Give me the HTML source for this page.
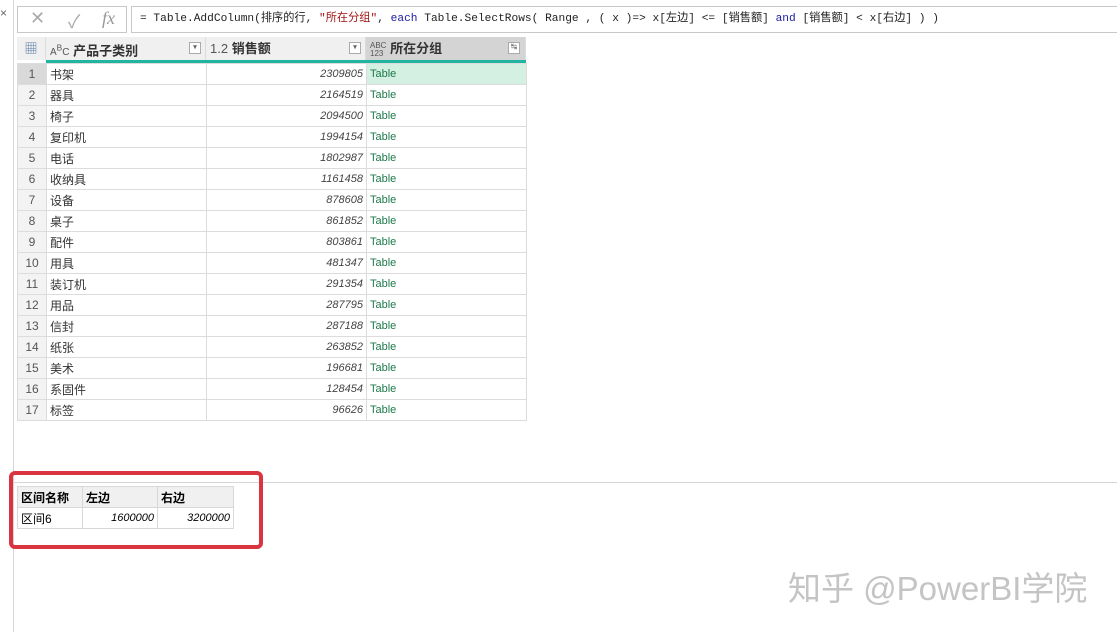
<!DOCTYPE html>
<html><head><meta charset="utf-8"><style>
body{margin:0;width:1117px;height:632px;background:#fff;position:relative;overflow:hidden;font-family:"Liberation Sans","Noto Sans CJK SC",sans-serif;}
.a{position:absolute}
.vl{left:13px;top:0;width:1px;height:632px;background:#d6d6d6}
.fb{left:17px;top:6px;width:110px;height:27px;border:1px solid #c8c8c8;box-sizing:border-box;color:#aaa;font-size:18px}
.ft{left:131px;top:6px;width:990px;height:27px;border:1px solid #c8c8c8;box-sizing:border-box;font-family:"Liberation Mono","Noto Sans CJK SC",monospace;font-size:11.2px;line-height:25px;padding-left:8px;white-space:nowrap;color:#222}
table{border-collapse:collapse;position:absolute;table-layout:fixed}
.t tr{height:21px}
.t td{border:1px solid #dcdcdc;height:21px;padding:0 3px;font-size:12px;box-sizing:border-box;color:#333}
.t td.n{background:#f3f3f3;color:#555;text-align:center;width:29px}
.t td.v{text-align:right;font-style:italic;font-size:11px;color:#444}
.t td.tb{color:#1d7a4a;font-size:11px}
.h{left:17px;top:37px;height:23px;width:509px;background:#f0f0f0;font-size:13px;font-weight:bold;color:#333}
.h div{position:absolute;top:0;height:23px;line-height:23px;border-right:1px solid #dcdcdc;box-sizing:border-box}
.dd{position:absolute;top:5px;width:12px;height:12px;border:1px solid #aaa;background:#fff;box-sizing:border-box;font-size:7px;line-height:10px;text-align:center;color:#666}
.s td{border:1px solid #d8d8d8;height:21px;padding:0 3px;font-size:12px;box-sizing:border-box}
</style></head><body>
<div class="a vl"></div>
<div class="a" style="left:0;top:6px;font-size:12px;color:#666">×</div>
<div class="a fb"><span class="a" style="left:12px;top:1px">✕</span><span class="a" style="left:50px;top:1px">✓</span><span class="a" style="left:84px;top:1px;font-family:'Liberation Serif',serif;font-style:italic;color:#999">fx</span></div>
<div class="a ft">= Table.AddColumn(排序的行, <span style="color:#a31515">"所在分组"</span>, <span style="color:#1a1aa6">each</span> Table.SelectRows( Range , ( x )=> x[左边] &lt;= [销售额] <span style="color:#1a1aa6">and</span> [销售额] &lt; x[右边] ) )</div>
<div class="a h">
<div style="left:0;width:29px;background:#f0f0f0;font-weight:normal;color:#5a7ba8;text-align:center">▦</div>
<div style="left:29px;width:160px;padding-left:4px"><span style="font-size:10px;font-weight:normal;color:#555">A<sup>B</sup>C</span> 产品子类别<span class="dd" style="left:143px">▾</span></div>
<div style="left:189px;width:160px;padding-left:4px"><span style="font-weight:normal;color:#555">1.2</span> 销售额<span class="dd" style="left:143px">▾</span></div>
<div style="left:349px;width:160px;padding-left:4px;background:#d4d4d4"><span style="font-size:8px;font-weight:normal;color:#555;display:inline-block;line-height:8px;vertical-align:middle">ABC<br>123</span> 所在分组<span class="dd" style="left:142px;font-size:6px">↹</span></div>
</div>
<div class="a" style="left:46px;top:60px;width:480px;height:3px;background:#1fb5a0"></div>
<table class="t" style="left:17px;top:63px;width:509px">
<col style="width:29px"><col style="width:160px"><col style="width:160px"><col style="width:160px">
<tr><td class="n" style="background:#d9d9d9">1</td><td>书架</td><td class="v">2309805</td><td class="tb" style="background:#d3f0e2">Table</td></tr>
<tr><td class="n">2</td><td>器具</td><td class="v">2164519</td><td class="tb">Table</td></tr>
<tr><td class="n">3</td><td>椅子</td><td class="v">2094500</td><td class="tb">Table</td></tr>
<tr><td class="n">4</td><td>复印机</td><td class="v">1994154</td><td class="tb">Table</td></tr>
<tr><td class="n">5</td><td>电话</td><td class="v">1802987</td><td class="tb">Table</td></tr>
<tr><td class="n">6</td><td>收纳具</td><td class="v">1161458</td><td class="tb">Table</td></tr>
<tr><td class="n">7</td><td>设备</td><td class="v">878608</td><td class="tb">Table</td></tr>
<tr><td class="n">8</td><td>桌子</td><td class="v">861852</td><td class="tb">Table</td></tr>
<tr><td class="n">9</td><td>配件</td><td class="v">803861</td><td class="tb">Table</td></tr>
<tr><td class="n">10</td><td>用具</td><td class="v">481347</td><td class="tb">Table</td></tr>
<tr><td class="n">11</td><td>装订机</td><td class="v">291354</td><td class="tb">Table</td></tr>
<tr><td class="n">12</td><td>用品</td><td class="v">287795</td><td class="tb">Table</td></tr>
<tr><td class="n">13</td><td>信封</td><td class="v">287188</td><td class="tb">Table</td></tr>
<tr><td class="n">14</td><td>纸张</td><td class="v">263852</td><td class="tb">Table</td></tr>
<tr><td class="n">15</td><td>美术</td><td class="v">196681</td><td class="tb">Table</td></tr>
<tr><td class="n">16</td><td>系固件</td><td class="v">128454</td><td class="tb">Table</td></tr>
<tr><td class="n">17</td><td>标签</td><td class="v">96626</td><td class="tb">Table</td></tr>
</table>
<div class="a" style="left:13px;top:482px;width:1104px;height:1px;background:#d6d6d6"></div>
<table class="s" style="left:17px;top:486px;width:216px">
<col style="width:65px"><col style="width:75px"><col style="width:76px">
<tr style="background:#f0f0f0;font-weight:bold"><td>区间名称</td><td>左边</td><td>右边</td></tr>
<tr><td>区间6</td><td style="text-align:right;font-style:italic;font-size:11px">1600000</td><td style="text-align:right;font-style:italic;font-size:11px">3200000</td></tr>
</table>
<div class="a" style="left:9px;top:471px;width:254px;height:78px;border:4px solid #d9343f;border-radius:6px;box-sizing:border-box"></div>
<div class="a" style="left:788px;top:562px;font-size:33px;color:#c4c4c4;white-space:nowrap">知乎 @PowerBI学院</div>
</body></html>
